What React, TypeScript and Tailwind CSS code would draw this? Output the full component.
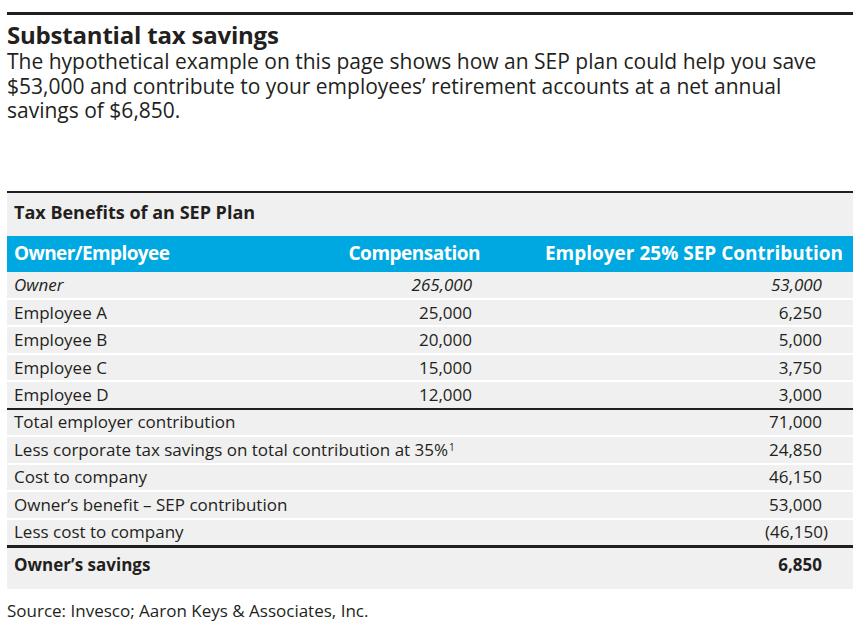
const rows = [
  { name: "Owner", comp: "265,000", contrib: "53,000", italic: true },
  { name: "Employee A", comp: "25,000", contrib: "6,250" },
  { name: "Employee B", comp: "20,000", contrib: "5,000" },
  { name: "Employee C", comp: "15,000", contrib: "3,750" },
  { name: "Employee D", comp: "12,000", contrib: "3,000" },
];

const totals = [
  { label: "Total employer contribution", value: "71,000" },
  { label: "Less corporate tax savings on total contribution at 35%", value: "24,850", note: "1" },
  { label: "Cost to company", value: "46,150" },
  { label: "Owner’s benefit – SEP contribution", value: "53,000" },
  { label: "Less cost to company", value: "(46,150", paren: true },
];

export default function App() {
  return (
    <div className="w-[859px] h-[628px] bg-white text-[#231f20] font-['Open_Sans',sans-serif] overflow-hidden">
      {/* intro */}
      <div className="pt-3 pl-[7px] pr-[6px]">
        <div className="h-[3px] bg-[#231f20]" />
        <h1 className="mt-[6px] text-[24px] leading-[28px] font-bold tracking-[-0.2px]">
          Substantial tax savings
        </h1>
        <p className="text-[21px] leading-[24.5px] w-[830px]">
          The hypothetical example on this page shows how an SEP plan could help you save
          $53,000 and contribute to your employees’ retirement accounts at a net annual
          savings of $6,850.
        </p>
      </div>

      {/* table */}
      <div className="mt-[68px] ml-[7px] w-[846px] bg-[#f0f0f0]">
        <div className="h-[2px] bg-[#231f20]" />
        <div className="h-[43px] pl-[7px] pt-[6px] text-[18px] font-bold">Tax Benefits of an SEP Plan</div>
        <div className="grid grid-cols-[1fr_200px_373px] h-[36px] items-center bg-[#00a8e1] text-white text-[19px] font-bold">
          <div className="pl-[7px] tracking-[-0.6px]">Owner/Employee</div>
          <div className="text-right tracking-[-0.5px]">Compensation</div>
          <div className="text-right pr-[10px]">Employer 25% SEP Contribution</div>
        </div>
        {rows.map((r, i) => (
          <div
            key={r.name}
            className={`grid grid-cols-[1fr_200px_373px] items-center text-[17px] ${i % 2 === 0 ? "h-[26px]" : "h-[25px]"} ${i < rows.length - 1 ? "border-b-2 border-white box-content" : ""} ${r.italic ? "italic" : ""}`}
          >
            <div className="pl-[7px]">{r.name}</div>
            <div className="text-right pr-[8px]">{r.comp}</div>
            <div className="text-right pr-[31px]">{r.contrib}</div>
          </div>
        ))}
        <div className="h-[2px] bg-[#231f20]" />
        {totals.map((t, i) => (
          <div
            key={t.label}
            className={`flex justify-between items-center text-[17px] ${i % 2 === 0 ? "h-[25px]" : "h-[26px]"} ${i < totals.length - 1 ? "border-b-2 border-white box-content" : ""}`}
          >
            <div className="pl-[7px]">
              {t.label}
              {t.note && <sup className="text-[10px] ml-[1px]">{t.note}</sup>}
            </div>
            <div className="pr-[31px]">
              {t.value}
              {t.paren && <span className="-mr-[6px]">)</span>}
            </div>
          </div>
        ))}
        <div className="h-[3px] bg-[#231f20]" />
        <div className="flex justify-between h-[41px] pt-[4px] text-[17px] font-bold">
          <div className="pl-[7px]">Owner’s savings</div>
          <div className="pr-[31px]">6,850</div>
        </div>
      </div>

      <div className="mt-[9px] ml-[7px] text-[17px]">Source: Invesco; Aaron Keys &amp; Associates, Inc.</div>
    </div>
  );
}
